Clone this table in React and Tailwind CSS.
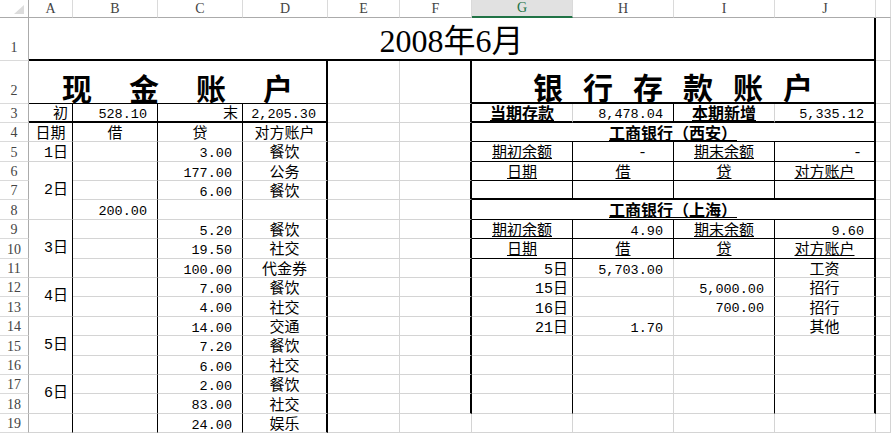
import React from "react";
import clsx from "clsx";

// border styles for a cell edge: g = gridline, k = thin black, K = thick black
const R = {
  g: "border-r border-r-[#d4d4d4]",
  k: "border-r border-r-black",
  K: "border-r-2 border-r-black",
};
const B = {
  g: "border-b border-b-[#d4d4d4]",
  k: "border-b border-b-black",
  K: "border-b-2 border-b-black",
};
const ALIGN = {
  c: "justify-center items-center pt-[5px]",
  r: "justify-end items-center pt-[5px] pr-[4px]",
  n: "justify-end items-center pt-[5px] pr-[10px]",
  m: "justify-end items-center pr-[4px]",
  t: "justify-center items-end",
};

function C({ r = "g", b = "g", span = "", align = "c", bold, u, cls = "", children }) {
  return (
    <div
      className={clsx(
        "flex min-w-0 whitespace-nowrap",
        R[r],
        B[b],
        span,
        ALIGN[align],
        bold && "font-bold text-[16px]",
        u && "underline underline-offset-[1px] decoration-1",
        cls
      )}
    >
      {children}
    </div>
  );
}

// number cell in accounting format
function N({ r = "k", b = "g", children }) {
  return (
    <C r={r} b={b} align="n">
      <span className="text-[13.5px]">{children}</span>
    </C>
  );
}

function Hdr({ sel, children }) {
  return (
    <div
      className={clsx(
        "flex items-center justify-center border-r border-r-[#dadada] font-['Liberation_Serif',serif] text-[14px]",
        sel
          ? "bg-[#e1e1e1] text-[#217346] border-b-2 border-b-[#217346]"
          : "text-[#444] border-b border-b-[#ababab]"
      )}
    >
      {children}
    </div>
  );
}

function RowNum({ tall, children }) {
  return (
    <div
      className={clsx(
        "flex justify-center items-end border-r border-r-[#ababab] border-b border-b-[#dadada] font-['Liberation_Serif',serif] text-[14px] text-[#444]",
        tall ? "pb-[5px]" : "pb-[1px]"
      )}
    >
      {children}
    </div>
  );
}

function BigTitle({ text, gap }) {
  return (
    <div className={clsx("flex text-[30px] font-semibold font-['Noto_Sans_CJK_SC',sans-serif]", gap)}>
      {text.split("").map((ch, i) => (
        <span key={i}>{ch}</span>
      ))}
    </div>
  );
}

// E, F and K filler cells
const E = () => <C />;
const F = ({ thick = true }) => <C r={thick ? "K" : "g"} />;
const K = () => <C r="g" />;

// empty bank rows 15-18
function BankEmpty() {
  return (
    <>
      <C r="k" />
      <C r="g" />
      <C r="k" />
      <C r="K" />
    </>
  );
}

export default function App() {
  return (
    <div className="w-[891px] h-[434px] overflow-hidden bg-white">
      <div className="grid grid-cols-[29px_44px_85px_85px_85px_72px_72px_101px_101px_101px_101px_1fr] grid-rows-[18px_43px_42.5px_repeat(17,19.4px)] font-['Liberation_Mono','Noto_Sans_CJK_SC',monospace] text-[15px] leading-none text-black">
        {/* column headers */}
        <div className="flex items-end justify-end pr-[4px] pb-[3px] border-r border-r-[#ababab] border-b border-b-[#ababab]">
          <svg width="10" height="9" viewBox="0 0 10 9">
            <polygon points="10,0 10,9 0,9" fill="#dcdcdc" />
          </svg>
        </div>
        <Hdr>A</Hdr>
        <Hdr>B</Hdr>
        <Hdr>C</Hdr>
        <Hdr>D</Hdr>
        <Hdr>E</Hdr>
        <Hdr>F</Hdr>
        <Hdr sel>G</Hdr>
        <Hdr>H</Hdr>
        <Hdr>I</Hdr>
        <Hdr>J</Hdr>
        <Hdr></Hdr>

        {/* row 1 */}
        <RowNum tall>1</RowNum>
        <C span="col-span-10" r="K" b="K" align="t" cls="pb-[2px] font-['Liberation_Serif','Noto_Sans_CJK_SC',serif] text-[32px]">
          2008年6月
        </C>
        <K />

        {/* row 2 */}
        <RowNum tall>2</RowNum>
        <C span="col-span-4" r="K" b="k" align="t" cls="pb-[1px]">
          <BigTitle text="现金账户" gap="gap-[37px]" />
        </C>
        <E />
        <F />
        <C span="col-span-4" r="K" b="K" align="t" cls="pb-[1px]">
          <BigTitle text="银行存款账户" gap="gap-[20px]" />
        </C>
        <K />

        {/* row 3 */}
        <RowNum>3</RowNum>
        <C r="k" b="K" align="r">初</C>
        <N r="k" b="K">528.10</N>
        <C r="k" b="K" align="r">末</C>
        <N r="K" b="K">2,205.30</N>
        <E />
        <F />
        <C r="g" b="K" bold u>当期存款</C>
        <N r="k" b="K">8,478.04</N>
        <C r="g" b="K" bold u>本期新增</C>
        <N r="K" b="K">5,335.12</N>
        <K />

        {/* row 4 */}
        <RowNum>4</RowNum>
        <C r="k">日期</C>
        <C r="k">借</C>
        <C r="k">贷</C>
        <C r="K">对方账户</C>
        <E />
        <F />
        <C span="col-span-4" r="K" b="k" bold u>工商银行（西安）</C>
        <K />

        {/* row 5 */}
        <RowNum>5</RowNum>
        <C r="k" align="r">1日</C>
        <C r="k" />
        <N>3.00</N>
        <C r="K">餐饮</C>
        <E />
        <F />
        <C r="k" b="k" u>期初余额</C>
        <C r="k" b="k" align="r" cls="pr-[26px]">-</C>
        <C r="k" b="k" u>期末余额</C>
        <C r="K" b="k" align="r" cls="pr-[12px]">-</C>
        <K />

        {/* row 6 */}
        <RowNum>6</RowNum>
        <C span="row-span-3" r="k" align="m">2日</C>
        <C r="k" />
        <N>177.00</N>
        <C r="K">公务</C>
        <E />
        <F />
        <C r="k" b="k" u>日期</C>
        <C r="k" b="k" u>借</C>
        <C r="k" b="k" u>贷</C>
        <C r="K" b="k" u>对方账户</C>
        <K />

        {/* row 7 */}
        <RowNum>7</RowNum>
        <C r="k" />
        <N>6.00</N>
        <C r="K">餐饮</C>
        <E />
        <F />
        <C r="k" b="K" />
        <C r="k" b="K" />
        <C r="k" b="K" />
        <C r="K" b="K" />
        <K />

        {/* row 8 */}
        <RowNum>8</RowNum>
        <N>200.00</N>
        <C r="k" />
        <C r="K" />
        <E />
        <F />
        <C span="col-span-4" r="K" b="k" bold u>工商银行（上海）</C>
        <K />

        {/* row 9 */}
        <RowNum>9</RowNum>
        <C span="row-span-3" r="k" align="m">3日</C>
        <C r="k" />
        <N>5.20</N>
        <C r="K">餐饮</C>
        <E />
        <F />
        <C r="k" b="k" u>期初余额</C>
        <N r="k" b="k">4.90</N>
        <C r="k" b="k" u>期末余额</C>
        <N r="K" b="k">9.60</N>
        <K />

        {/* row 10 */}
        <RowNum>10</RowNum>
        <C r="k" />
        <N>19.50</N>
        <C r="K">社交</C>
        <E />
        <F />
        <C r="k" b="k" u>日期</C>
        <C r="k" b="k" u>借</C>
        <C r="k" b="k" u>贷</C>
        <C r="K" b="k" u>对方账户</C>
        <K />

        {/* row 11 */}
        <RowNum>11</RowNum>
        <C r="k" />
        <N>100.00</N>
        <C r="K">代金券</C>
        <E />
        <F />
        <C r="k" align="r">5日</C>
        <N r="g">5,703.00</N>
        <C r="k" />
        <C r="K">工资</C>
        <K />

        {/* row 12 */}
        <RowNum>12</RowNum>
        <C span="row-span-2" r="k" align="m">4日</C>
        <C r="k" />
        <N>7.00</N>
        <C r="K">餐饮</C>
        <E />
        <F />
        <C r="k" align="r">15日</C>
        <C r="g" />
        <N r="k">5,000.00</N>
        <C r="K">招行</C>
        <K />

        {/* row 13 */}
        <RowNum>13</RowNum>
        <C r="k" />
        <N>4.00</N>
        <C r="K">社交</C>
        <E />
        <F />
        <C r="k" align="r">16日</C>
        <C r="g" />
        <N r="k">700.00</N>
        <C r="K">招行</C>
        <K />

        {/* row 14 */}
        <RowNum>14</RowNum>
        <C span="row-span-3" r="k" align="m">5日</C>
        <C r="k" />
        <N>14.00</N>
        <C r="K">交通</C>
        <E />
        <F />
        <C r="k" align="r">21日</C>
        <N r="g">1.70</N>
        <C r="k" />
        <C r="K">其他</C>
        <K />

        {/* row 15 */}
        <RowNum>15</RowNum>
        <C r="k" />
        <N>7.20</N>
        <C r="K">餐饮</C>
        <E />
        <F />
        <BankEmpty />
        <K />

        {/* row 16 */}
        <RowNum>16</RowNum>
        <C r="k" />
        <N>6.00</N>
        <C r="K">社交</C>
        <E />
        <F />
        <BankEmpty />
        <K />

        {/* row 17 */}
        <RowNum>17</RowNum>
        <C span="row-span-2" r="k" align="m">6日</C>
        <C r="k" />
        <N>2.00</N>
        <C r="K">餐饮</C>
        <E />
        <F />
        <BankEmpty />
        <K />

        {/* row 18 */}
        <RowNum>18</RowNum>
        <C r="k" />
        <N>83.00</N>
        <C r="K">社交</C>
        <E />
        <F />
        <BankEmpty />
        <K />

        {/* row 19 */}
        <RowNum>19</RowNum>
        <C r="k" />
        <C r="k" />
        <N>24.00</N>
        <C r="K">娱乐</C>
        <E />
        <F thick={false} />
        <C />
        <C />
        <C />
        <C />
        <K />
      </div>
    </div>
  );
}
